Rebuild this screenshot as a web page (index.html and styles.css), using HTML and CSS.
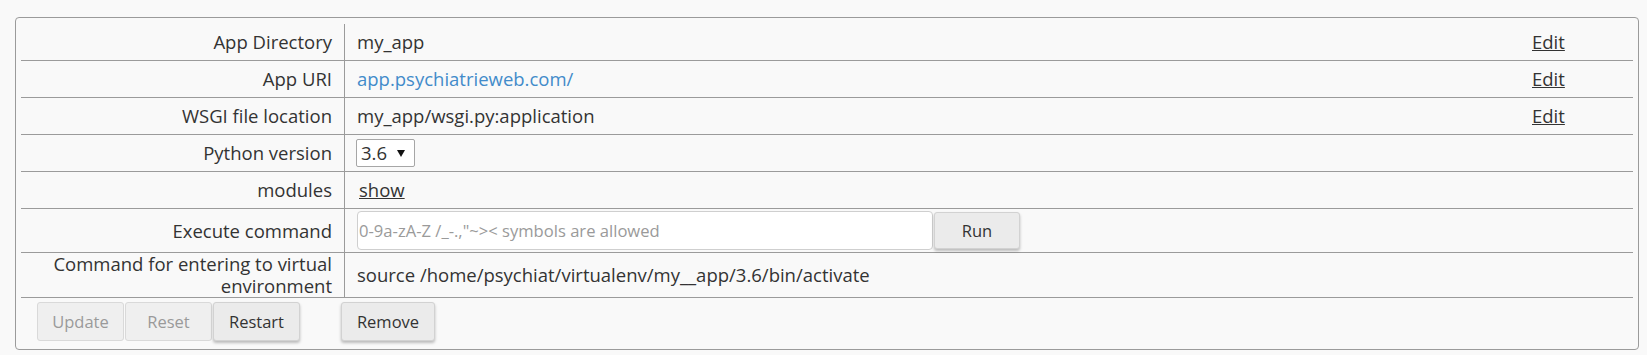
FILE: index.html
```html
<!DOCTYPE html>
<html lang="en">
<head>
<meta charset="utf-8">
<title>Python App</title>
<link rel="stylesheet" href="styles.css">
</head>
<body>
<div class="panel">
  <div class="grid">
    <div class="row">
      <div class="label">App Directory</div>
      <div class="value">my_app</div>
      <div class="action"><a class="plain-link" href="#">Edit</a></div>
    </div>
    <div class="row">
      <div class="label">App URI</div>
      <div class="value"><a class="url" href="#">app.psychiatrieweb.com/</a></div>
      <div class="action"><a class="plain-link" href="#">Edit</a></div>
    </div>
    <div class="row">
      <div class="label">WSGI file location</div>
      <div class="value">my_app/wsgi.py:application</div>
      <div class="action"><a class="plain-link" href="#">Edit</a></div>
    </div>
    <div class="row">
      <div class="label">Python version</div>
      <div class="value">
        <span class="select-wrap">
          <select class="select"><option>3.6</option></select>
          <svg class="select-arrow" width="8" height="8" viewBox="0 0 8 8"><path d="M0 1 L8 1 L4 8 Z" fill="#111"/></svg>
        </span>
      </div>
      <div class="action"></div>
    </div>
    <div class="row">
      <div class="label">modules</div>
      <div class="value"><a class="plain-link show-link" href="#">show</a></div>
      <div class="action"></div>
    </div>
    <div class="row row-cmd">
      <div class="label">Execute command</div>
      <div class="value cmd">
        <input class="cmd-input" type="text" placeholder="0-9a-zA-Z /_-.,&quot;~&gt;&lt; symbols are allowed">
        <button class="btn btn-run">Run</button>
      </div>
      <div class="action"></div>
    </div>
    <div class="row row-env">
      <div class="label">Command for entering to virtual environment</div>
      <div class="value">source /home/psychiat/virtualenv/my__app/3.6/bin/activate</div>
      <div class="action"></div>
    </div>
  </div>
  <div class="buttons">
    <button class="btn btn-disabled" disabled>Update</button>
    <button class="btn btn-disabled" disabled>Reset</button>
    <button class="btn">Restart</button>
    <button class="btn btn-remove">Remove</button>
  </div>
</div>
</body>
</html>
```

FILE: styles.css
```css
html, body {
  margin: 0;
  padding: 0;
  background: #f9f9f9;
}

body {
  font-family: "Open Sans", "Liberation Sans", sans-serif;
  color: #333;
  font-size: 18.5px;
  line-height: 22px;
}

.panel {
  margin: 17px 8px 0 15px;
  border: 1px solid #9b9b9b;
  border-radius: 4px;
  padding: 6px 5px 7px 5px;
  height: 318px;
  box-sizing: content-box;
}

.grid {
  display: flex;
  flex-direction: column;
}

.row {
  display: grid;
  grid-template-columns: 324px 1fr 113px;
  min-height: 36px;
  border-bottom: 1px solid #9b9b9b;
}

.row-cmd {
  min-height: 43px;
}

.row-env {
  min-height: 44px;
}

.label {
  border-right: 1px solid #9b9b9b;
  display: flex;
  align-items: center;
  justify-content: flex-end;
  text-align: right;
  padding: 0 12px 0 16px;
}

.value {
  display: flex;
  align-items: center;
  padding-left: 12px;
}

.action {
  display: flex;
  align-items: center;
  padding-left: 12px;
}

.plain-link {
  color: #333;
  text-decoration: underline;
}

.show-link {
  margin-left: 2px;
}

.url {
  color: #428bca;
  text-decoration: none;
}

.select-wrap {
  position: relative;
  display: inline-block;
  margin-left: -1px;
}

.select {
  appearance: none;
  -webkit-appearance: none;
  font-family: "Open Sans", "Liberation Sans", sans-serif;
  font-size: 18.5px;
  color: #333;
  width: 59px;
  height: 28px;
  padding: 0 0 0 4px;
  border: 1px solid #a6a6a6;
  border-radius: 2px;
  background: #fff;
  line-height: 26px;
}

.select-arrow {
  position: absolute;
  left: 41px;
  top: 10px;
  pointer-events: none;
}

.cmd {
  align-items: flex-start;
  padding-top: 2px;
}

.cmd-input {
  box-sizing: border-box;
  width: 576px;
  height: 39px;
  border: 1px solid #cfcfcf;
  border-radius: 4px;
  background: #fff;
  padding: 0 1px;
  font-family: "Open Sans", "Liberation Sans", sans-serif;
  font-size: 16.6px;
  color: #333;
}

.cmd-input::placeholder {
  color: #9a9a9a;
}

.btn {
  box-sizing: border-box;
  font-family: "Open Sans", "Liberation Sans", sans-serif;
  font-size: 16.5px;
  color: #333;
  background: #ebebeb;
  border: 1px solid #d2d2d2;
  border-radius: 3px;
  box-shadow: 0 2px 3px rgba(0, 0, 0, 0.25);
  height: 39px;
  width: 87px;
  padding: 0;
}

.btn-run {
  width: 86px;
  height: 37px;
  margin-top: 1px;
  margin-left: 1px;
}

.btn-disabled {
  background: #efefef;
  border-color: #d9d9d9;
  color: #9a9a9a;
  box-shadow: none;
}

.btn-remove {
  width: 94px;
  margin-left: 40px;
}

.buttons {
  display: flex;
  gap: 1px;
  padding: 4px 0 0 16px;
}
```
